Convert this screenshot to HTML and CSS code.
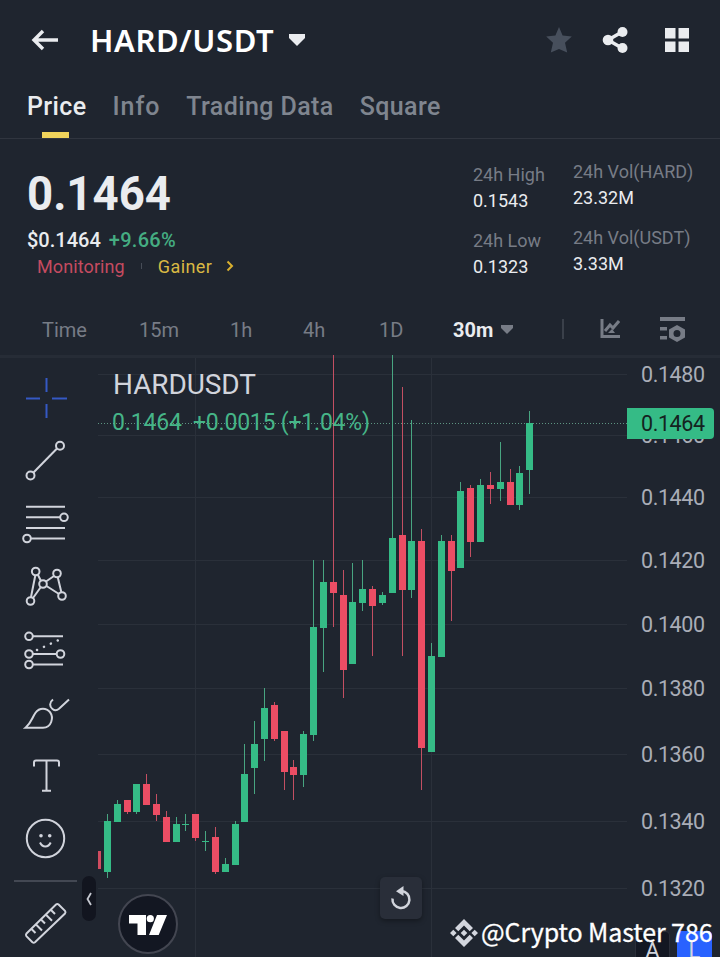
FILE: index.html
```html
<!DOCTYPE html>
<html lang="en">
<head>
  <meta charset="UTF-8" />
  <meta name="viewport" content="width=device-width, initial-scale=1.0"/>
  <title>HARD/USDT</title>
  <link rel="stylesheet" href="styles.css">
</head>
<body>

<header>
  <svg class="back" width="28" height="22" viewBox="0 0 28 22"><path d="M12 2L3 11l9 9M4 11h23"/></svg>
  <h1>HARD/USDT</h1>
  <svg class="caret" width="18" height="14" viewBox="0 0 18 14"><path d="M1 1h16v4L9 13 1 5z"/></svg>
  <div class="header-icons">
    <svg width="28" height="28" viewBox="0 0 28 28"><path class="star" d="M14 1l3.6 8.400 9.200 1-6.800 6.400 2.200 9.600L14 22.900l-8.200 3.500L8 16.800 1.200 10.400l9.200-1z"/></svg>
    <svg width="28" height="28" viewBox="0 0 28 28"><path d="M21 6L7 14l14 8" fill="none" stroke="#eaecef" stroke-width="3.5"/><circle cx="21.500" cy="6" r="5"/><circle cx="7" cy="14" r="5.300"/><circle cx="21.500" cy="22" r="5"/></svg>
    <svg width="28" height="28" viewBox="0 0 28 28"><path d="M2 2h10.500v10.500H2zM15.500 2h10.500v10.500H15.500zM2 15.500h10.500v10.500H2zM15.500 15.500h10.500v10.500H15.500z"/></svg>
  </div>
</header>

<nav class="tabs">
  <a class="tab active">Price</a>
  <a class="tab info">Info</a>
  <a class="tab trading">Trading Data</a>
  <a class="tab square">Square</a>
</nav>

<section class="summary">
  <div class="price-box">
    <div class="price">0.1464</div>
    <div class="fiat">$0.1464 <span class="up">+9.66%</span></div>
    <div class="tags">
      <span class="monitoring">Monitoring</span>
      <i></i>
      <span class="gainer">Gainer</span>
      <svg width="8" height="12" viewBox="0 0 8 12"><path d="M1.500 1.500L6 6l-4.500 4.500"/></svg>
    </div>
  </div>
  <dl class="stats">
    <dt>24h High</dt>
    <dd>0.1543</dd>
    <dt>24h Low</dt>
    <dd>0.1323</dd>
  </dl>
  <dl class="stats vol">
    <dt>24h Vol(HARD)</dt>
    <dd>23.32M</dd>
    <dt>24h Vol(USDT)</dt>
    <dd>3.33M</dd>
  </dl>
</section>

<div class="intervals">
  <span class="t-time">Time</span>
  <span class="t-15">15m</span>
  <span class="t-1h">1h</span>
  <span class="t-4h">4h</span>
  <span class="t-1d">1D</span>
  <span class="t-30 active">30m</span>
  <svg class="down" width="12" height="9" viewBox="0 0 12 9"><path d="M0 0h12v3L6 9 0 3z"/></svg>
  <i></i>
  <svg class="ind" width="20" height="20" viewBox="0 0 20 20"><path d="M2 0v17.500h18M5 12l5-6 3 3 6-7" fill="none" stroke="#777c86" stroke-width="3"/><path d="M8 14l4-4 3 4z"/></svg>
  <svg class="set" width="26" height="26" viewBox="0 0 26 26"><path d="M0 1h25v4H0zM0 11h7v3.500H0zM0 20h7v3.500H0z"/><path d="M17 9l8 4.500v8L17 26l-8-4.500v-8zm0 5a3.500 3.500 0 1 0 0 7 3.500 3.500 0 0 0 0-7z" fill-rule="evenodd"/></svg>
</div>

<main>
  <aside class="tools">
    <svg class="cross" viewBox="0 0 98 63"><path d="M46.500 11v14M46.500 37v14M26 31.500h14M52 31.500h15"/></svg>
    <svg viewBox="0 0 98 63"><circle cx="60" cy="15.700" r="4"/><circle cx="30.500" cy="45.500" r="4"/><path d="M33.500 42.500L57 18.500"/></svg>
    <svg viewBox="0 0 98 63"><path d="M26 13.700h39M26 24.300h34M26 35h39M31 45.500h34"/><circle cx="64" cy="24.300" r="3.800"/><circle cx="27" cy="45.500" r="3.800"/></svg>
    <svg viewBox="0 0 98 63"><path d="M35.300 19.500L31 41M38 19l3 6M46 25.500l8-5.500M57.800 21.500L61.300 36M46.500 30l12.500 8M40.500 31.500L33 42"/><circle cx="35.700" cy="15.500" r="3.800"/><circle cx="57" cy="17.500" r="3.800"/><circle cx="43" cy="28" r="3.800"/><circle cx="62" cy="40" r="3.800"/><circle cx="30.500" cy="45" r="3.800"/></svg>
    <svg viewBox="0 0 98 63"><path d="M33 17.300h30M33 35h23.500M33 45.500h30"/><circle cx="29" cy="17.300" r="3.800"/><circle cx="29" cy="35" r="3.800"/><circle cx="60.500" cy="35" r="3.800"/><circle cx="29" cy="45.500" r="3.800"/><path class="dots" d="M37 31l24-11"/></svg>
    <svg viewBox="0 0 98 63"><path d="M25.500 45.700c6-5 6.500-10 10-15 4-5.500 11-5 14.500-.5 4 5.500 1.500 15.500-7 15.500zM53 17.500c-4 3-3.500 7-.5 9.500 2.500 2 4.500 1.500 6.500-.2l10-9.300"/></svg>
    <svg viewBox="0 0 98 63"><path d="M34 21.500v-4q0-2 2-2h21q2 0 2 2v4M46.500 15.500v30M42 45.700h9"/></svg>
    <svg viewBox="0 0 98 63"><circle cx="45.500" cy="30.500" r="18.700"/><path d="M40 34.500c2.500 5.300 8.200 5.300 10.700 0"/><circle class="eye" cx="41" cy="27.700" r="1.800"/><circle class="eye" cx="49.700" cy="27.700" r="1.800"/></svg>
    <hr>
    <svg viewBox="0 0 98 63"><path d="M26.500 42.500L56 13.500q1.300-1 2.600 0l6.400 6.400q1 1.300 0 2.600L35 51.300q-1.300 1-2.600 0l-6-6.200q-1-1.300.1-2.600zM31.500 38l4 4M36 33.500l6 6M41 28.500l4 4M46 23.700l6 6M51 19l4 4"/></svg>
  </aside>

  <svg class="chart" id="chart" width="622" height="602" viewBox="98 355 622 602"></svg>

  <div class="handle"><svg width="6" height="14" viewBox="0 0 6 14"><path d="M5 1L1.500 7 5 13"/></svg></div>
  <div class="tv-logo"><svg width="38" height="20" viewBox="0 0 38 20"><path d="M0 0h17v20H8.500V8.500H0zM28 0h10l-8.300 20H20z"/><circle cx="21.300" cy="3.700" r="3.600"/></svg></div>
  <div class="reset"><svg width="22" height="24" viewBox="0 0 22 24"><path d="M2.500 12.500a8.500 8.500 0 1 0 9-7.500" fill="none" stroke="#d1d4dc" stroke-width="2.500"/><path d="M13.500 0v10L6 5.300z"/></svg></div>
  <div class="scale-btns"><span>A</span><span class="on">L</span></div>
  <div class="watermark">
    <svg width="28" height="28" viewBox="0 0 28 28"><path d="M14 0l9 9-3.300 3.300L14 6.600l-5.700 5.700L5 9zM14 28l9-9-3.300-3.300L14 21.400l-5.700-5.700L5 19zM14 10.700l3.300 3.300-3.300 3.300-3.300-3.300zM3.300 10.700L6.600 14l-3.300 3.300L0 14zM24.700 10.700L28 14l-3.300 3.300-3.300-3.300z"/></svg>
    <span>@Crypto Master 786</span>
  </div>
</main>

<script src="chart.js"></script>
</body>
</html>
```
FILE: styles.css
```css
:root {
  --bg: #1f252f;
  --line: #2b313b;
  --text: #eaecef;
  --dim: #777c86;
  --green: #35bb86;
}

* {
  box-sizing: border-box;
  margin: 0;
  padding: 0;
}

body {
  width: 720px;
  height: 957px;
  overflow: hidden;
  background: var(--bg);
  color: var(--text);
  font-family: Roboto, "Liberation Sans", sans-serif;
}

svg {
  display: block;
  flex: none;
}

header {
  height: 80px;
  padding: 0 29px 0 31px;
  display: flex;
  align-items: center;
}

header svg {
  fill: var(--text);
}

.back path {
  fill: none;
  stroke: var(--text);
  stroke-width: 3.4;
}

h1 {
  width: 185px;
  margin: 0 13px 0 31px;
  color: #fff;
  font: 600 31px "Noto Sans", sans-serif;
  letter-spacing: 0.6px;
  white-space: nowrap;
}

.header-icons {
  margin-left: auto;
  display: flex;
}

.header-icons svg + svg {
  margin-left: 28px;
}

.header-icons svg:last-child {
  margin-left: 34px;
}

header .star {
  fill: #474f5c;
}

.tabs {
  height: 59px;
  padding-left: 27px;
  display: flex;
  border-bottom: 1px solid #30353f;
  color: #7f858f;
  font-size: 25px;
  font-weight: 500;
}

.tab {
  height: 58px;
  padding-top: 12px;
  margin-right: 26px;
  letter-spacing: 0.4px;
  white-space: nowrap;
}

.tab.info {
  letter-spacing: 0.9px;
}

.tab.active {
  color: var(--text);
  display: flex;
  flex-direction: column;
  align-items: center;
}

.tab.active::after {
  content: "";
  width: 27px;
  height: 6px;
  margin-top: auto;
  margin-right: 2px;
  background: #f0d35b;
}

.summary {
  height: 164px;
  padding: 0 0 0 27px;
  display: flex;
}

.price-box {
  width: 446px;
  padding-top: 25px;
}

.price {
  height: 62px;
  line-height: 60px;
  font-size: 49px;
  font-weight: 700;
  transform: scaleX(0.93);
  transform-origin: left;
}

.fiat {
  height: 28px;
  line-height: 28px;
  font-size: 20px;
  font-weight: 500;
}

.up {
  color: #45ad82;
  margin-left: 3px;
  letter-spacing: 0.3px;
}

.tags {
  height: 24px;
  padding-left: 10px;
  display: flex;
  align-items: center;
  font-size: 18px;
}

.monitoring {
  color: #c54b60;
  letter-spacing: 0.1px;
}

.tags i {
  width: 1px;
  height: 6px;
  margin: 0 16px;
  background: #474d57;
}

.gainer {
  color: #d9b943;
  letter-spacing: 0.4px;
}

.tags svg {
  margin-left: 14px;
  fill: none;
  stroke: #d9b02f;
  stroke-width: 2;
}

.stats {
  width: 100px;
  padding-top: 23px;
  font-size: 18px;
  line-height: 26px;
  white-space: nowrap;
}

.stats.vol {
  padding-top: 20px;
}

dt {
  color: var(--dim);
}

dd {
  margin-bottom: 14px;
}

.intervals {
  height: 52px;
  padding-left: 42px;
  display: flex;
  align-items: center;
  font-size: 20px;
  color: #777c86;
}

.intervals span {
  flex: none;
  padding-top: 2px;
}

.t-time { width: 97px; }
.t-15 { width: 91px; }
.t-1h { width: 73px; }
.t-4h { width: 76px; }
.t-1d { width: 74px; }
.t-30 { width: 48px; }

.intervals .active {
  color: var(--text);
  font-weight: 700;
}

.intervals svg {
  fill: #777c86;
}

.intervals i {
  width: 2px;
  height: 20px;
  margin: 0 36px 0 49px;
  background: #3a404a;
}

.set {
  margin-left: 40px;
}

main {
  position: relative;
  height: 602px;
  display: flex;
}

.tools {
  width: 98px;
  padding-top: 12px;
  border-top: 3px solid #262c36;
}

.tools svg {
  width: 98px;
  height: 63px;
  fill: none;
  stroke: #d1d4dc;
  stroke-width: 2;
}

.tools svg:first-child {
  margin-top: -3px;
}

.tools .cross {
  stroke: #3559c4;
}

.tools .eye {
  fill: #d1d4dc;
  stroke: none;
}

.tools .dots {
  stroke-width: 2.5;
  stroke-linecap: round;
  stroke-dasharray: 0.1 7.500;
}

.tools hr {
  width: 63px;
  margin: 9px 0 9px 14px;
  border: 0;
  border-top: 2px solid #434853;
}

.chart {
  font-family: Roboto, sans-serif;
}

.handle {
  position: absolute;
  left: 82px;
  top: 521px;
  width: 14px;
  height: 45px;
  border-radius: 7px;
  background: #12151f;
  display: flex;
  align-items: center;
  justify-content: center;
}

.handle svg {
  fill: none;
  stroke: #c5c8d0;
  stroke-width: 1.8;
}

.tv-logo {
  position: absolute;
  left: 118px;
  top: 539px;
  width: 60px;
  height: 60px;
  border: 2px solid #434651;
  border-radius: 50%;
  background: #131722;
  display: flex;
  align-items: center;
  justify-content: center;
}

.tv-logo svg {
  margin-top: 2px;
  fill: #fff;
}

.reset {
  position: absolute;
  left: 380px;
  top: 522px;
  width: 42px;
  height: 42px;
  border-radius: 5px;
  background: #292e39;
  box-shadow: 0 2px 5px rgba(0, 0, 0, 0.35);
  display: flex;
  align-items: center;
  justify-content: center;
}

.reset svg {
  fill: #d1d4dc;
}

.scale-btns {
  position: absolute;
  left: 635px;
  top: 576px;
  height: 26px;
  overflow: hidden;
  display: flex;
  gap: 7px;
}

.scale-btns span {
  width: 35px;
  height: 36px;
  padding-top: 6px;
  border: 1px solid #2a2e39;
  border-radius: 4px;
  background: #131722;
  color: #d1d4dc;
  font-size: 22px;
  line-height: 26px;
  text-align: center;
}

.scale-btns .on {
  background: #2962ff;
  border-color: #2962ff;
}

.watermark {
  position: absolute;
  left: 450px;
  top: 560px;
  height: 36px;
  display: flex;
  align-items: center;
  gap: 3px;
  color: #fff;
  font: 400 25px/36px "Noto Sans CJK SC", sans-serif;
  white-space: nowrap;
}

.watermark span {
  margin-top: -4px;
  letter-spacing: -0.1px;
  -webkit-text-stroke: 0.3px #fff;
}

.watermark svg {
  fill: #d3d6de;
}
```
FILE: chart.js
```js
const svg = document.getElementById('chart');

// x, high, low, body top, body bottom, up
const candles = [
  [107, 814, 878, 821, 872, 1], [117, 800, 822, 804, 822, 1], [127, 800, 814, 800, 812, 0],
  [136, 784, 814, 784, 812, 1], [146, 774, 805, 784, 805, 0], [156, 794, 821, 804, 815, 0],
  [166, 811, 842, 817, 842, 0], [176, 817, 842, 824, 842, 1], [185, 814, 831, 824, 825, 1],
  [195, 814, 841, 814, 838, 0], [205, 831, 851, 841, 842, 1], [215, 827, 874, 837, 872, 0],
  [225, 858, 872, 864, 872, 1], [235, 821, 865, 824, 865, 1], [244, 744, 822, 774, 822, 1],
  [254, 721, 794, 744, 768, 1], [264, 688, 761, 708, 739, 1], [274, 702, 741, 705, 739, 0],
  [284, 731, 790, 731, 772, 0], [293, 760, 800, 767, 775, 0], [303, 731, 787, 734, 775, 1],
  [313, 560, 741, 627, 735, 1], [323, 560, 672, 582, 628, 1], [333, 355, 627, 582, 593, 0],
  [343, 570, 698, 595, 670, 0], [352, 563, 664, 602, 664, 1], [362, 560, 611, 589, 603, 1],
  [372, 586, 656, 589, 606, 0], [382, 592, 605, 595, 603, 1], [392, 355, 593, 538, 593, 1],
  [402, 387, 656, 535, 590, 0], [411, 420, 598, 541, 590, 1], [421, 529, 790, 541, 748, 0],
  [431, 643, 752, 656, 752, 1], [441, 535, 657, 541, 657, 1], [451, 535, 621, 541, 571, 0],
  [460, 482, 568, 491, 568, 1], [470, 485, 557, 488, 542, 0], [480, 479, 542, 485, 542, 1],
  [490, 472, 504, 485, 489, 0], [500, 442, 501, 482, 489, 1], [510, 469, 505, 482, 505, 0],
  [519, 466, 510, 473, 505, 1], [529, 411, 494, 423, 470, 1]
];

const levels = [
  ['0.1480', 374], ['0.1460', 435], ['0.1440', 497], ['0.1420', 560], ['0.1400', 624],
  ['0.1380', 688], ['0.1360', 754], ['0.1340', 821], ['0.1320', 888]
];

const rect = (x, y, w, h, fill) =>
  `<rect x="${x}" y="${y}" width="${w}" height="${h}" fill="${fill}"/>`;
const text = (x, y, w, size, fill, str) =>
  `<text x="${x}" y="${y}" font-size="${size}" textLength="${w}" fill="${fill}">${str}</text>`;

let out = rect(98, 355, 622, 3, '#262c36');

// grid and price scale
levels.forEach(([label, y]) => {
  out += rect(98, y, 529, 1, '#2a303a');
  out += text(641, y + 8, 64, 21.5, '#a9adb7', label);
});
out += rect(195, 358, 1, 599, '#2a303a') + rect(431, 358, 1, 599, '#2a303a');

out += '<path d="M98 423.5H627" stroke="#5d9482" stroke-width="1" stroke-dasharray="1 2"/>';

out += rect(98, 851, 3, 18, '#d04c60');
candles.forEach(([x, hi, lo, top, bottom, up]) => {
  out += rect(x, hi, 1, lo - hi, up ? '#48a581' : '#c34f62');
  out += rect(x - 3, top, 7, bottom - top, up ? '#35bb86' : '#ec4d64');
});

// legend
out += text(113, 394, 143, 28, '#d1d4dc', 'HARDUSDT');
out += text(112, 430, 70, 23, '#46b588', '0.1464');
out += text(193, 430, 177, 23, '#46b588', '+0.0015 (+1.04%)');

// last price
out += '<path d="M627 408h83q4 0 4 4v23q0 4-4 4h-83z" fill="#35bb86"/>';
out += text(641, 431, 64, 21.5, '#14231f', '0.1464');

svg.innerHTML = out;
```
